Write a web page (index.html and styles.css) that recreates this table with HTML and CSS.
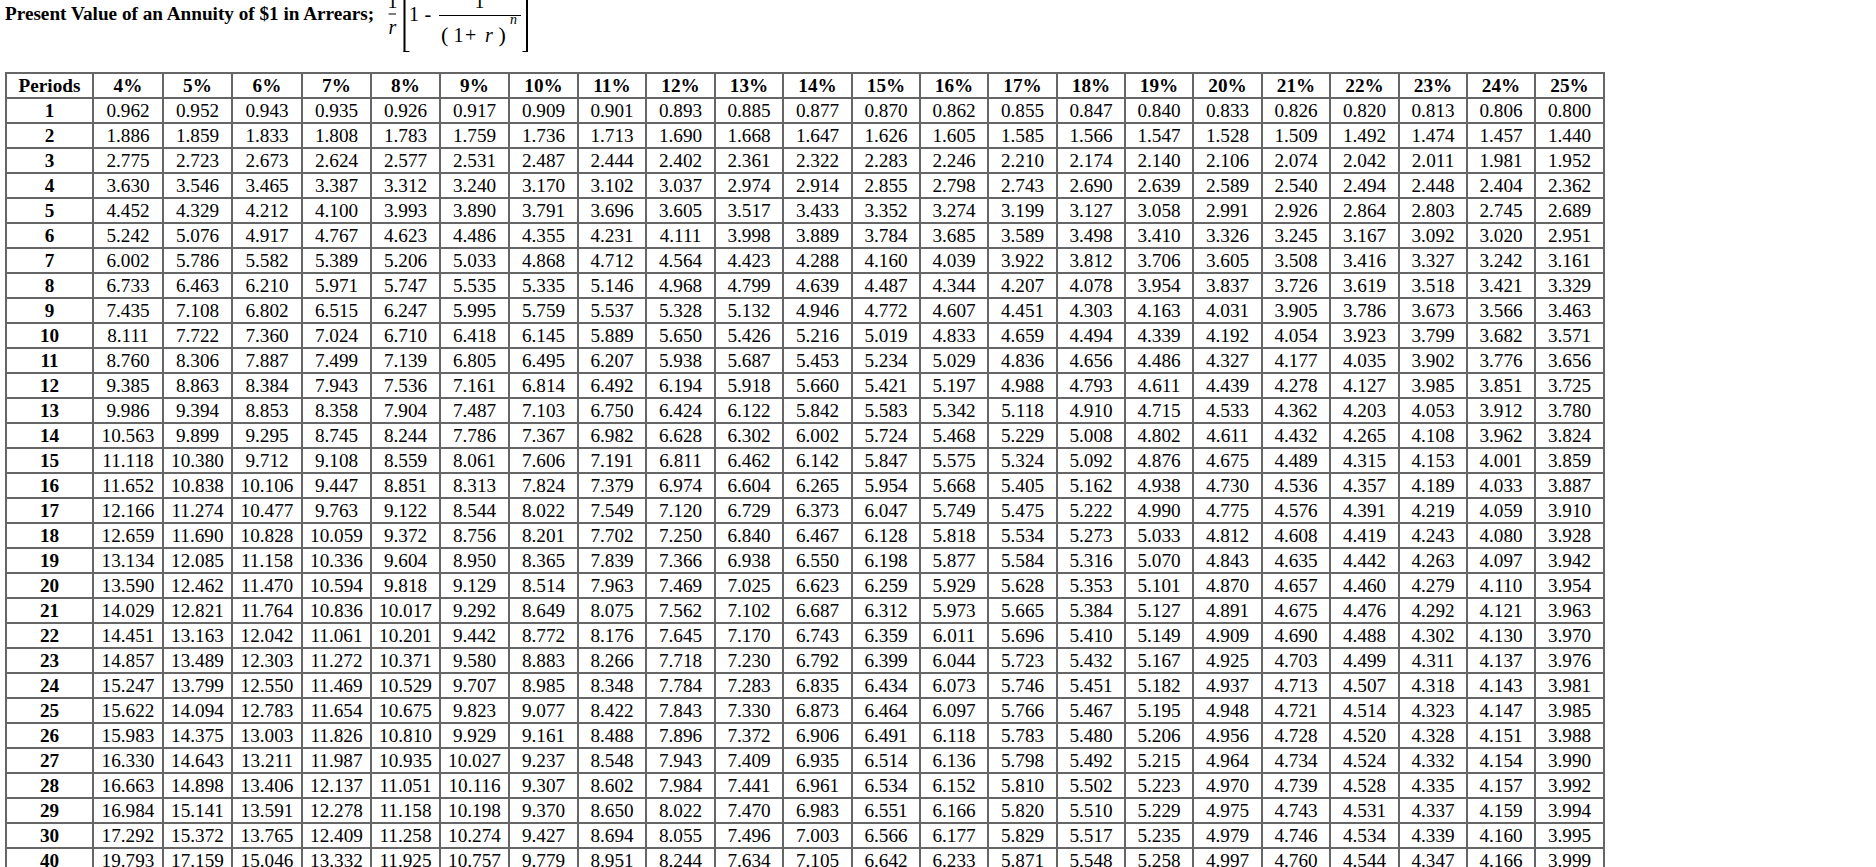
FILE: index.html
```html
<!DOCTYPE html>
<html lang="en">
<head>
<meta charset="utf-8">
<title>Present Value of an Annuity of $1 in Arrears</title>
<link rel="stylesheet" href="styles.css">
</head>
<body>
<div class="heading">
  <h1 class="title">Present Value of an Annuity of $1 in Arrears;</h1>
  <svg class="formula" width="156" height="80" viewBox="384 -25 156 80" aria-label="1/r [1 - 1/(1+r)^n]">
    <text class="m" x="398.5" y="7.5" text-anchor="middle">1</text>
    <rect class="bar" x="394.5" y="13.5" width="7.5" height="1"/>
    <text class="m it" x="398.5" y="33.5" text-anchor="middle">r</text>
    <rect class="bar" x="409.5" y="-21" width="2" height="73"/>
    <rect class="bar" x="409.5" y="-21" width="6" height="1"/>
    <rect class="bar" x="409.5" y="51" width="6" height="1"/>
    <text class="m" x="415" y="20.7">1</text>
    <text class="m" x="430.5" y="20.7">-</text>
    <rect class="bar" x="445" y="15" width="82" height="1"/>
    <text class="m" x="485.5" y="7.5" text-anchor="middle">1</text>
    <text class="m" y="42"><tspan class="paren" x="447">(</tspan><tspan x="459.5">1</tspan><tspan x="471">+</tspan><tspan class="it" x="491">r</tspan><tspan class="paren" x="504.5">)</tspan></text>
    <text class="m sup it" x="516" y="24">n</text>
    <rect class="bar" x="532" y="-21" width="2" height="73"/>
    <rect class="bar" x="528.5" y="-21" width="5.5" height="1"/>
    <rect class="bar" x="528.5" y="51" width="5.5" height="1"/>
  </svg>
</div>
<table class="pv-table">
<thead>
<tr><th class="w87">Periods</th><th class="w70">4%</th><th class="w69">5%</th><th class="w70">6%</th><th class="w69">7%</th><th class="w69">8%</th><th class="w69">9%</th><th class="w69">10%</th><th class="w68">11%</th><th class="w69">12%</th><th class="w68">13%</th><th class="w69">14%</th><th class="w68">15%</th><th class="w68">16%</th><th class="w69">17%</th><th class="w68">18%</th><th class="w68">19%</th><th class="w69">20%</th><th class="w68">21%</th><th class="w69">22%</th><th class="w68">23%</th><th class="w68">24%</th><th class="w69">25%</th></tr>
</thead>
<tbody>
<tr><th>1</th><td>0.962</td><td>0.952</td><td>0.943</td><td>0.935</td><td>0.926</td><td>0.917</td><td>0.909</td><td>0.901</td><td>0.893</td><td>0.885</td><td>0.877</td><td>0.870</td><td>0.862</td><td>0.855</td><td>0.847</td><td>0.840</td><td>0.833</td><td>0.826</td><td>0.820</td><td>0.813</td><td>0.806</td><td>0.800</td></tr>
<tr><th>2</th><td>1.886</td><td>1.859</td><td>1.833</td><td>1.808</td><td>1.783</td><td>1.759</td><td>1.736</td><td>1.713</td><td>1.690</td><td>1.668</td><td>1.647</td><td>1.626</td><td>1.605</td><td>1.585</td><td>1.566</td><td>1.547</td><td>1.528</td><td>1.509</td><td>1.492</td><td>1.474</td><td>1.457</td><td>1.440</td></tr>
<tr><th>3</th><td>2.775</td><td>2.723</td><td>2.673</td><td>2.624</td><td>2.577</td><td>2.531</td><td>2.487</td><td>2.444</td><td>2.402</td><td>2.361</td><td>2.322</td><td>2.283</td><td>2.246</td><td>2.210</td><td>2.174</td><td>2.140</td><td>2.106</td><td>2.074</td><td>2.042</td><td>2.011</td><td>1.981</td><td>1.952</td></tr>
<tr><th>4</th><td>3.630</td><td>3.546</td><td>3.465</td><td>3.387</td><td>3.312</td><td>3.240</td><td>3.170</td><td>3.102</td><td>3.037</td><td>2.974</td><td>2.914</td><td>2.855</td><td>2.798</td><td>2.743</td><td>2.690</td><td>2.639</td><td>2.589</td><td>2.540</td><td>2.494</td><td>2.448</td><td>2.404</td><td>2.362</td></tr>
<tr><th>5</th><td>4.452</td><td>4.329</td><td>4.212</td><td>4.100</td><td>3.993</td><td>3.890</td><td>3.791</td><td>3.696</td><td>3.605</td><td>3.517</td><td>3.433</td><td>3.352</td><td>3.274</td><td>3.199</td><td>3.127</td><td>3.058</td><td>2.991</td><td>2.926</td><td>2.864</td><td>2.803</td><td>2.745</td><td>2.689</td></tr>
<tr><th>6</th><td>5.242</td><td>5.076</td><td>4.917</td><td>4.767</td><td>4.623</td><td>4.486</td><td>4.355</td><td>4.231</td><td>4.111</td><td>3.998</td><td>3.889</td><td>3.784</td><td>3.685</td><td>3.589</td><td>3.498</td><td>3.410</td><td>3.326</td><td>3.245</td><td>3.167</td><td>3.092</td><td>3.020</td><td>2.951</td></tr>
<tr><th>7</th><td>6.002</td><td>5.786</td><td>5.582</td><td>5.389</td><td>5.206</td><td>5.033</td><td>4.868</td><td>4.712</td><td>4.564</td><td>4.423</td><td>4.288</td><td>4.160</td><td>4.039</td><td>3.922</td><td>3.812</td><td>3.706</td><td>3.605</td><td>3.508</td><td>3.416</td><td>3.327</td><td>3.242</td><td>3.161</td></tr>
<tr><th>8</th><td>6.733</td><td>6.463</td><td>6.210</td><td>5.971</td><td>5.747</td><td>5.535</td><td>5.335</td><td>5.146</td><td>4.968</td><td>4.799</td><td>4.639</td><td>4.487</td><td>4.344</td><td>4.207</td><td>4.078</td><td>3.954</td><td>3.837</td><td>3.726</td><td>3.619</td><td>3.518</td><td>3.421</td><td>3.329</td></tr>
<tr><th>9</th><td>7.435</td><td>7.108</td><td>6.802</td><td>6.515</td><td>6.247</td><td>5.995</td><td>5.759</td><td>5.537</td><td>5.328</td><td>5.132</td><td>4.946</td><td>4.772</td><td>4.607</td><td>4.451</td><td>4.303</td><td>4.163</td><td>4.031</td><td>3.905</td><td>3.786</td><td>3.673</td><td>3.566</td><td>3.463</td></tr>
<tr><th>10</th><td>8.111</td><td>7.722</td><td>7.360</td><td>7.024</td><td>6.710</td><td>6.418</td><td>6.145</td><td>5.889</td><td>5.650</td><td>5.426</td><td>5.216</td><td>5.019</td><td>4.833</td><td>4.659</td><td>4.494</td><td>4.339</td><td>4.192</td><td>4.054</td><td>3.923</td><td>3.799</td><td>3.682</td><td>3.571</td></tr>
<tr><th>11</th><td>8.760</td><td>8.306</td><td>7.887</td><td>7.499</td><td>7.139</td><td>6.805</td><td>6.495</td><td>6.207</td><td>5.938</td><td>5.687</td><td>5.453</td><td>5.234</td><td>5.029</td><td>4.836</td><td>4.656</td><td>4.486</td><td>4.327</td><td>4.177</td><td>4.035</td><td>3.902</td><td>3.776</td><td>3.656</td></tr>
<tr><th>12</th><td>9.385</td><td>8.863</td><td>8.384</td><td>7.943</td><td>7.536</td><td>7.161</td><td>6.814</td><td>6.492</td><td>6.194</td><td>5.918</td><td>5.660</td><td>5.421</td><td>5.197</td><td>4.988</td><td>4.793</td><td>4.611</td><td>4.439</td><td>4.278</td><td>4.127</td><td>3.985</td><td>3.851</td><td>3.725</td></tr>
<tr><th>13</th><td>9.986</td><td>9.394</td><td>8.853</td><td>8.358</td><td>7.904</td><td>7.487</td><td>7.103</td><td>6.750</td><td>6.424</td><td>6.122</td><td>5.842</td><td>5.583</td><td>5.342</td><td>5.118</td><td>4.910</td><td>4.715</td><td>4.533</td><td>4.362</td><td>4.203</td><td>4.053</td><td>3.912</td><td>3.780</td></tr>
<tr><th>14</th><td>10.563</td><td>9.899</td><td>9.295</td><td>8.745</td><td>8.244</td><td>7.786</td><td>7.367</td><td>6.982</td><td>6.628</td><td>6.302</td><td>6.002</td><td>5.724</td><td>5.468</td><td>5.229</td><td>5.008</td><td>4.802</td><td>4.611</td><td>4.432</td><td>4.265</td><td>4.108</td><td>3.962</td><td>3.824</td></tr>
<tr><th>15</th><td>11.118</td><td>10.380</td><td>9.712</td><td>9.108</td><td>8.559</td><td>8.061</td><td>7.606</td><td>7.191</td><td>6.811</td><td>6.462</td><td>6.142</td><td>5.847</td><td>5.575</td><td>5.324</td><td>5.092</td><td>4.876</td><td>4.675</td><td>4.489</td><td>4.315</td><td>4.153</td><td>4.001</td><td>3.859</td></tr>
<tr><th>16</th><td>11.652</td><td>10.838</td><td>10.106</td><td>9.447</td><td>8.851</td><td>8.313</td><td>7.824</td><td>7.379</td><td>6.974</td><td>6.604</td><td>6.265</td><td>5.954</td><td>5.668</td><td>5.405</td><td>5.162</td><td>4.938</td><td>4.730</td><td>4.536</td><td>4.357</td><td>4.189</td><td>4.033</td><td>3.887</td></tr>
<tr><th>17</th><td>12.166</td><td>11.274</td><td>10.477</td><td>9.763</td><td>9.122</td><td>8.544</td><td>8.022</td><td>7.549</td><td>7.120</td><td>6.729</td><td>6.373</td><td>6.047</td><td>5.749</td><td>5.475</td><td>5.222</td><td>4.990</td><td>4.775</td><td>4.576</td><td>4.391</td><td>4.219</td><td>4.059</td><td>3.910</td></tr>
<tr><th>18</th><td>12.659</td><td>11.690</td><td>10.828</td><td>10.059</td><td>9.372</td><td>8.756</td><td>8.201</td><td>7.702</td><td>7.250</td><td>6.840</td><td>6.467</td><td>6.128</td><td>5.818</td><td>5.534</td><td>5.273</td><td>5.033</td><td>4.812</td><td>4.608</td><td>4.419</td><td>4.243</td><td>4.080</td><td>3.928</td></tr>
<tr><th>19</th><td>13.134</td><td>12.085</td><td>11.158</td><td>10.336</td><td>9.604</td><td>8.950</td><td>8.365</td><td>7.839</td><td>7.366</td><td>6.938</td><td>6.550</td><td>6.198</td><td>5.877</td><td>5.584</td><td>5.316</td><td>5.070</td><td>4.843</td><td>4.635</td><td>4.442</td><td>4.263</td><td>4.097</td><td>3.942</td></tr>
<tr><th>20</th><td>13.590</td><td>12.462</td><td>11.470</td><td>10.594</td><td>9.818</td><td>9.129</td><td>8.514</td><td>7.963</td><td>7.469</td><td>7.025</td><td>6.623</td><td>6.259</td><td>5.929</td><td>5.628</td><td>5.353</td><td>5.101</td><td>4.870</td><td>4.657</td><td>4.460</td><td>4.279</td><td>4.110</td><td>3.954</td></tr>
<tr><th>21</th><td>14.029</td><td>12.821</td><td>11.764</td><td>10.836</td><td>10.017</td><td>9.292</td><td>8.649</td><td>8.075</td><td>7.562</td><td>7.102</td><td>6.687</td><td>6.312</td><td>5.973</td><td>5.665</td><td>5.384</td><td>5.127</td><td>4.891</td><td>4.675</td><td>4.476</td><td>4.292</td><td>4.121</td><td>3.963</td></tr>
<tr><th>22</th><td>14.451</td><td>13.163</td><td>12.042</td><td>11.061</td><td>10.201</td><td>9.442</td><td>8.772</td><td>8.176</td><td>7.645</td><td>7.170</td><td>6.743</td><td>6.359</td><td>6.011</td><td>5.696</td><td>5.410</td><td>5.149</td><td>4.909</td><td>4.690</td><td>4.488</td><td>4.302</td><td>4.130</td><td>3.970</td></tr>
<tr><th>23</th><td>14.857</td><td>13.489</td><td>12.303</td><td>11.272</td><td>10.371</td><td>9.580</td><td>8.883</td><td>8.266</td><td>7.718</td><td>7.230</td><td>6.792</td><td>6.399</td><td>6.044</td><td>5.723</td><td>5.432</td><td>5.167</td><td>4.925</td><td>4.703</td><td>4.499</td><td>4.311</td><td>4.137</td><td>3.976</td></tr>
<tr><th>24</th><td>15.247</td><td>13.799</td><td>12.550</td><td>11.469</td><td>10.529</td><td>9.707</td><td>8.985</td><td>8.348</td><td>7.784</td><td>7.283</td><td>6.835</td><td>6.434</td><td>6.073</td><td>5.746</td><td>5.451</td><td>5.182</td><td>4.937</td><td>4.713</td><td>4.507</td><td>4.318</td><td>4.143</td><td>3.981</td></tr>
<tr><th>25</th><td>15.622</td><td>14.094</td><td>12.783</td><td>11.654</td><td>10.675</td><td>9.823</td><td>9.077</td><td>8.422</td><td>7.843</td><td>7.330</td><td>6.873</td><td>6.464</td><td>6.097</td><td>5.766</td><td>5.467</td><td>5.195</td><td>4.948</td><td>4.721</td><td>4.514</td><td>4.323</td><td>4.147</td><td>3.985</td></tr>
<tr><th>26</th><td>15.983</td><td>14.375</td><td>13.003</td><td>11.826</td><td>10.810</td><td>9.929</td><td>9.161</td><td>8.488</td><td>7.896</td><td>7.372</td><td>6.906</td><td>6.491</td><td>6.118</td><td>5.783</td><td>5.480</td><td>5.206</td><td>4.956</td><td>4.728</td><td>4.520</td><td>4.328</td><td>4.151</td><td>3.988</td></tr>
<tr><th>27</th><td>16.330</td><td>14.643</td><td>13.211</td><td>11.987</td><td>10.935</td><td>10.027</td><td>9.237</td><td>8.548</td><td>7.943</td><td>7.409</td><td>6.935</td><td>6.514</td><td>6.136</td><td>5.798</td><td>5.492</td><td>5.215</td><td>4.964</td><td>4.734</td><td>4.524</td><td>4.332</td><td>4.154</td><td>3.990</td></tr>
<tr><th>28</th><td>16.663</td><td>14.898</td><td>13.406</td><td>12.137</td><td>11.051</td><td>10.116</td><td>9.307</td><td>8.602</td><td>7.984</td><td>7.441</td><td>6.961</td><td>6.534</td><td>6.152</td><td>5.810</td><td>5.502</td><td>5.223</td><td>4.970</td><td>4.739</td><td>4.528</td><td>4.335</td><td>4.157</td><td>3.992</td></tr>
<tr><th>29</th><td>16.984</td><td>15.141</td><td>13.591</td><td>12.278</td><td>11.158</td><td>10.198</td><td>9.370</td><td>8.650</td><td>8.022</td><td>7.470</td><td>6.983</td><td>6.551</td><td>6.166</td><td>5.820</td><td>5.510</td><td>5.229</td><td>4.975</td><td>4.743</td><td>4.531</td><td>4.337</td><td>4.159</td><td>3.994</td></tr>
<tr><th>30</th><td>17.292</td><td>15.372</td><td>13.765</td><td>12.409</td><td>11.258</td><td>10.274</td><td>9.427</td><td>8.694</td><td>8.055</td><td>7.496</td><td>7.003</td><td>6.566</td><td>6.177</td><td>5.829</td><td>5.517</td><td>5.235</td><td>4.979</td><td>4.746</td><td>4.534</td><td>4.339</td><td>4.160</td><td>3.995</td></tr>
<tr><th>40</th><td>19.793</td><td>17.159</td><td>15.046</td><td>13.332</td><td>11.925</td><td>10.757</td><td>9.779</td><td>8.951</td><td>8.244</td><td>7.634</td><td>7.105</td><td>6.642</td><td>6.233</td><td>5.871</td><td>5.548</td><td>5.258</td><td>4.997</td><td>4.760</td><td>4.544</td><td>4.347</td><td>4.166</td><td>3.999</td></tr>
</tbody>
</table>
</body>
</html>
```
FILE: styles.css
```css
html, body {
  background: #ffffff;
}

body {
  margin: 0 0 0 5px;
  font-family: "Liberation Serif", Tinos, "Times New Roman", Times, serif;
  color: #000000;
}

.heading {
  display: flex;
  align-items: flex-start;
}

.title {
  margin: 3px 0 0 0;
  font-family: "Liberation Serif", Tinos, "Times New Roman", Times, serif;
  font-size: 19.2px;
  line-height: 22px;
  font-weight: bold;
  white-space: nowrap;
}

.formula {
  flex: none;
  margin: -25px 0 0 4px;
  overflow: visible;
}

.formula .m {
  font-family: "Liberation Serif", Tinos, "Times New Roman", Times, serif;
  font-size: 20px;
  fill: #000000;
}

.formula .it {
  font-style: italic;
}

.formula .paren {
  font-size: 22px;
}

.formula .sup {
  font-size: 14px;
}

.formula .bar {
  fill: #000000;
}

.pv-table {
  margin-top: 17px;
  border: 1px solid #666666;
  border-spacing: 0;
  table-layout: fixed;
  width: 1600px;
  font-family: "Liberation Serif", Tinos, "Times New Roman", Times, serif;
  font-size: 19.2px;
}

.pv-table th,
.pv-table td {
  box-sizing: border-box;
  border: 1px solid #666666;
  padding: 1px;
  line-height: 21px;
  text-align: center;
  white-space: nowrap;
}

.pv-table th {
  font-weight: bold;
}

.pv-table td {
  font-weight: normal;
}

.w87 { width: 87px; }
.w70 { width: 70px; }
.w69 { width: 69px; }
.w68 { width: 68px; }
```
